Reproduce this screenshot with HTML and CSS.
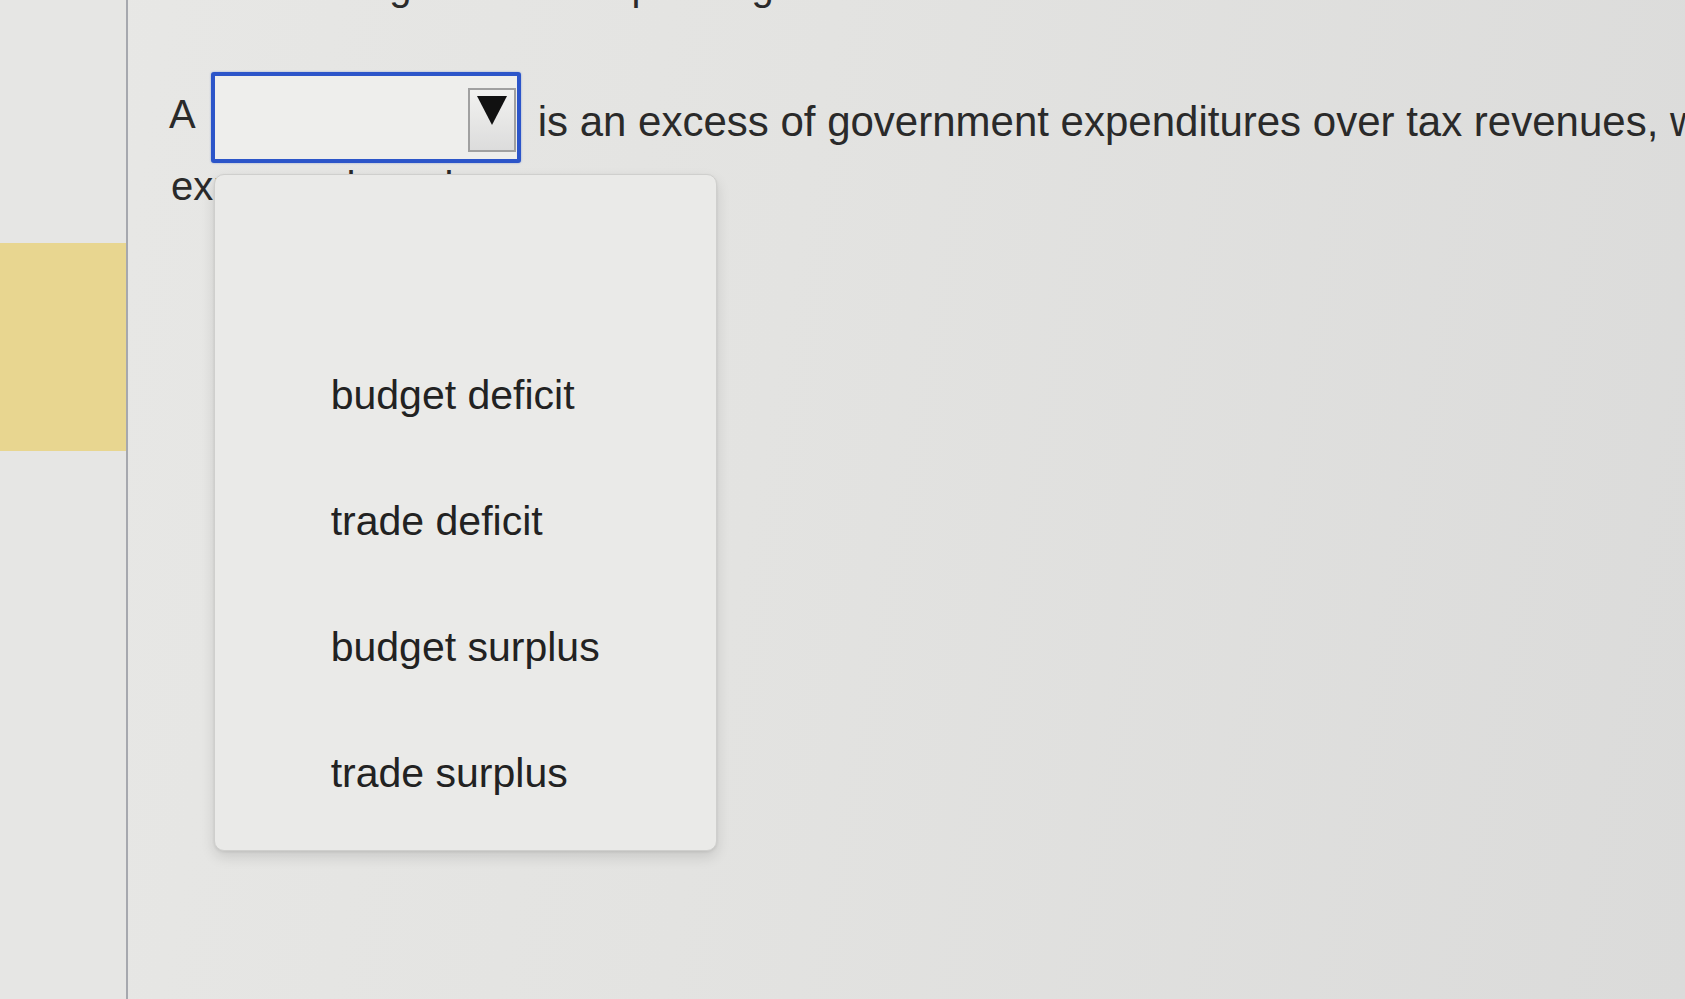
FILE: index.html
```html
<!DOCTYPE html>
<html lang="en">
<head>
<meta charset="utf-8">
<title>Question</title>
<link rel="stylesheet" href="styles.css">
</head>
<body>
  <aside class="sidebar">
    <div class="highlight"></div>
  </aside>
  <main class="main">
    <p class="prev-line">Think about government spending and its taxation.</p>
    <div class="row">
      <span class="word-a">A</span>
      <div class="select">
        <div class="select-value"></div>
        <div class="select-button">
          <svg width="32" height="32" viewBox="0 0 32 32" aria-hidden="true"><polygon points="1,2 31,2 16,31" fill="#111"/></svg>
        </div>
        <ul class="menu">
          <li class="option">budget deficit</li>
          <li class="option">trade deficit</li>
          <li class="option">budget surplus</li>
          <li class="option">trade surplus</li>
        </ul>
      </div>
      <span class="rest">is an excess of government expenditures over tax revenues, which</span>
    </div>
    <p class="line2">expressed yearly.</p>
  </main>
</body>
</html>
```
FILE: styles.css
```css
html, body {
  margin: 0;
  padding: 0;
  height: 100%;
  overflow: hidden;
}
body {
  display: flex;
  background: linear-gradient(100deg, #e8e8e6 0%, #e3e3e1 45%, #dbdbda 100%);
  font-family: "Liberation Sans", Arial, sans-serif;
  color: #2a2a2a;
}
.sidebar {
  width: 126px;
  flex: none;
  border-right: 2px solid #a6a8ae;
  background: #e6e6e4;
}
.highlight {
  margin-top: 243px;
  height: 208px;
  background: #e8d690;
}
.main {
  flex: 1;
  padding-left: 41px;
  min-width: 0;
}
.prev-line {
  margin: -38px 0 0 0;
  font-size: 40px;
  line-height: 48px;
  white-space: nowrap;
}
.row {
  display: flex;
  align-items: center;
  margin-top: 62px;
  white-space: nowrap;
  font-size: 40px;
}
.word-a {
  flex: none;
  margin-right: 15px;
  padding-bottom: 6px;
}
.select {
  position: relative;
  flex: none;
  width: 302px;
  height: 83px;
  border: 4px solid #2c55c9;
  border-radius: 3px;
  background: #eeeeec;
  display: flex;
  justify-content: flex-end;
  align-items: center;
  box-shadow: 0 0 2px rgba(44, 85, 201, 0.5);
  margin-right: 17px;
}
.select-value {
  flex: 1;
}
.select-button {
  width: 48px;
  height: 64px;
  margin-right: 1px;
  margin-top: 4px;
  border: 2px solid #a0a0a0;
  background: linear-gradient(#f2f2f0, #dcdcdc);
  display: flex;
  justify-content: center;
  padding-top: 4px;
  box-sizing: border-box;
}
.rest {
  font-size: 42px;
  padding-top: 8px;
}
.menu {
  position: absolute;
  left: -1px;
  top: 98px;
  width: 501px;
  margin: 0;
  padding: 157px 0 14px 0;
  list-style: none;
  background: #eaeae8;
  border: 1px solid #cfcfcd;
  border-radius: 10px;
  box-shadow: 0 6px 14px rgba(0, 0, 0, 0.12), 0 1px 3px rgba(0, 0, 0, 0.08);
  z-index: 2;
  display: flex;
  flex-direction: column;
}
.option {
  height: 126px;
  display: flex;
  align-items: center;
  padding-left: 116px;
  font-size: 41px;
  color: #222;
}
.line2 {
  margin: 0;
  font-size: 40px;
  line-height: 46px;
  padding-left: 2px;
  white-space: nowrap;
}
```
